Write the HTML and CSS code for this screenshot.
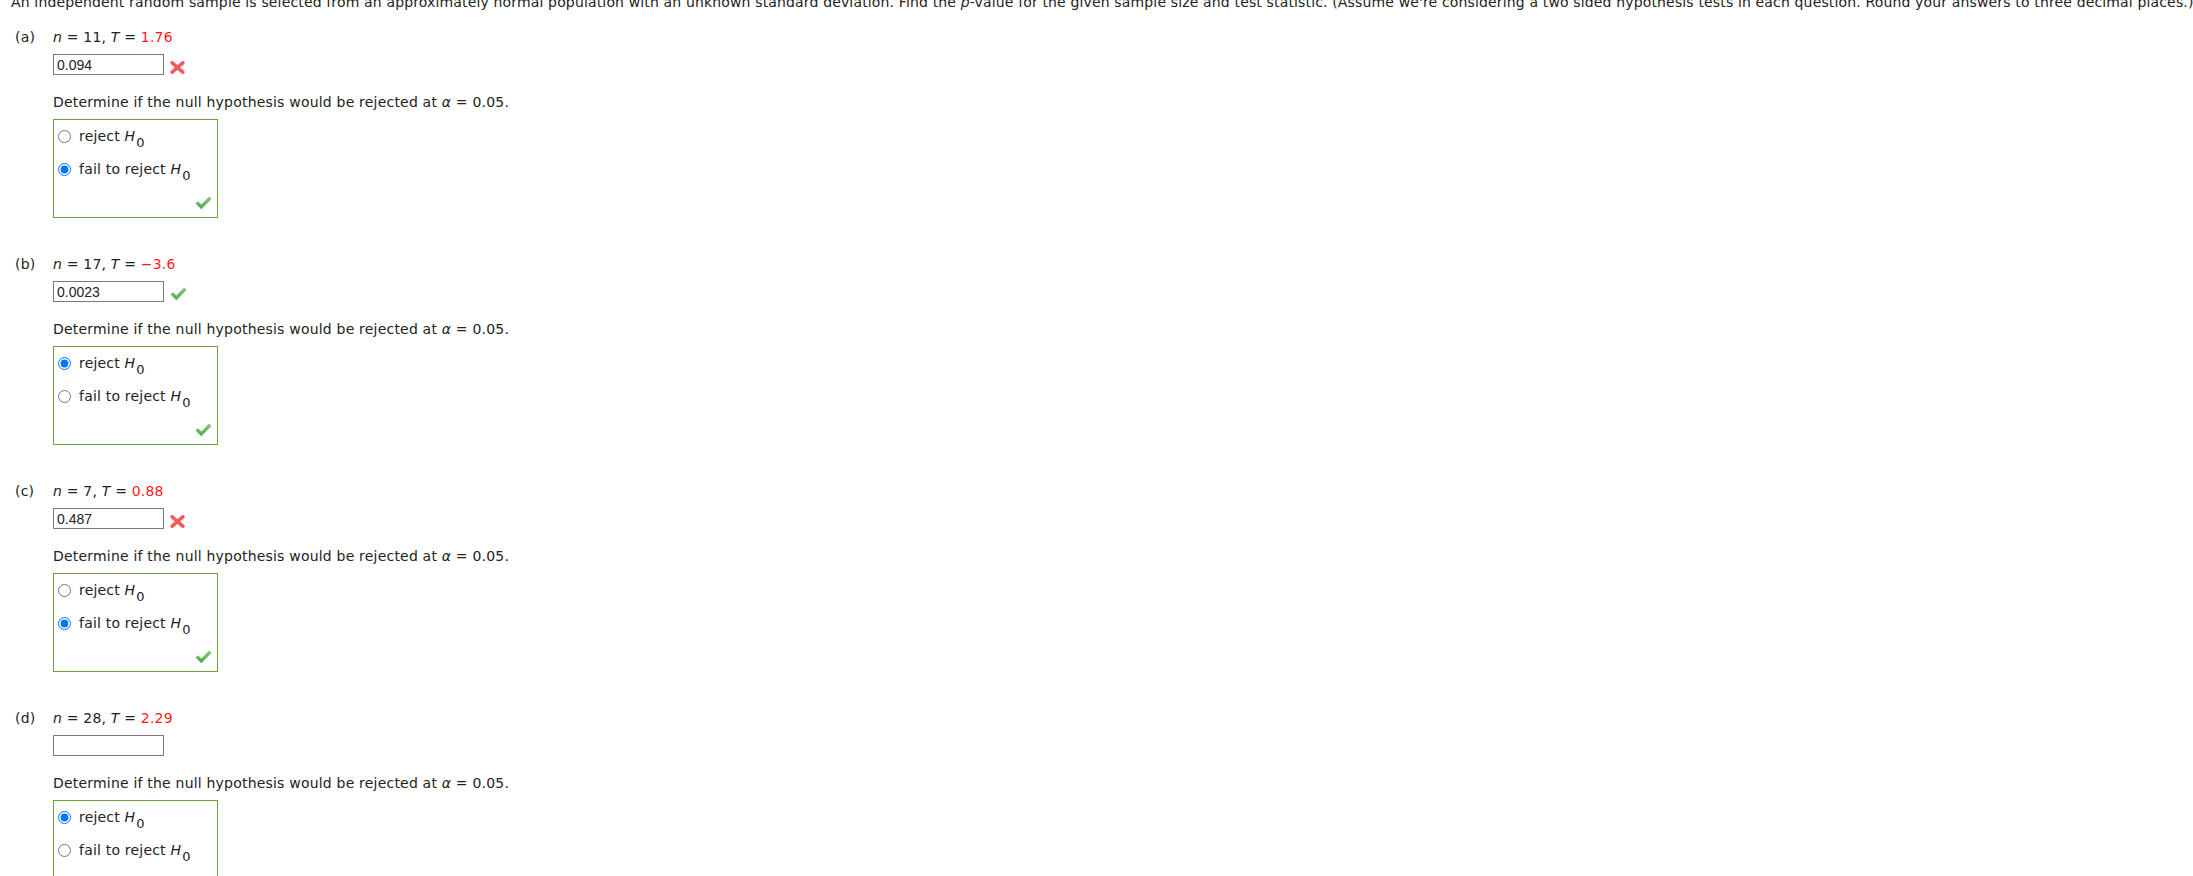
FILE: index.html
```html
<!DOCTYPE html>
<html lang="en">
<head>
<meta charset="utf-8">
<title>Hypothesis tests</title>
<link rel="stylesheet" href="styles.css">
</head>
<body>
<p class="intro">An independent random sample is selected from an approximately normal population with an unknown standard deviation. Find the <i>p</i>-value for the given sample size and test statistic. (Assume we're considering a two sided hypothesis tests in each question. Round your answers to three decimal places.)</p>

<div class="parts">
  <div class="part">
    <div class="label">(a)</div>
    <div class="body">
      <div class="stmt"><i>n</i> = 11, <i>T</i> = <span class="val">1.76</span></div>
      <div class="answer">
        <input class="ans" type="text" value="0.094">
        <svg class="icon-x" width="15" height="13" viewBox="0 0 15 13"><path d="M2.2 1.8 L12.8 11.2 M12.8 1.8 L2.2 11.2" stroke="#f05c5c" stroke-width="3.6" stroke-linecap="round" fill="none"/></svg>
      </div>
      <div class="question">Determine if the null hypothesis would be rejected at <i>α</i> = 0.05.</div>
      <div class="choices">
        <label class="opt"><input type="radio" name="a"><span>reject <i>H</i><sub>0</sub></span></label>
        <label class="opt"><input type="radio" name="a" checked><span>fail to reject <i>H</i><sub>0</sub></span></label>
        <div class="mark">
          <svg class="icon-check" width="17" height="14" viewBox="0 0 17 14"><defs><linearGradient id="g1" x1="0" y1="0" x2="0" y2="1"><stop offset="0" stop-color="#86cc7e"/><stop offset="1" stop-color="#4fa64b"/></linearGradient></defs><path d="M0.5 7.6 L3 5.2 L6.3 8.4 L14.2 0.5 L16.6 2.9 L6.3 13.3 Z" fill="url(#g1)"/></svg>
        </div>
      </div>
    </div>
  </div>

  <div class="part">
    <div class="label">(b)</div>
    <div class="body">
      <div class="stmt"><i>n</i> = 17, <i>T</i> = <span class="val">−3.6</span></div>
      <div class="answer">
        <input class="ans" type="text" value="0.0023">
        <svg class="icon-check side" width="17" height="14" viewBox="0 0 17 14"><defs><linearGradient id="g2" x1="0" y1="0" x2="0" y2="1"><stop offset="0" stop-color="#86cc7e"/><stop offset="1" stop-color="#4fa64b"/></linearGradient></defs><path d="M0.5 7.6 L3 5.2 L6.3 8.4 L14.2 0.5 L16.6 2.9 L6.3 13.3 Z" fill="url(#g2)"/></svg>
      </div>
      <div class="question">Determine if the null hypothesis would be rejected at <i>α</i> = 0.05.</div>
      <div class="choices">
        <label class="opt"><input type="radio" name="b" checked><span>reject <i>H</i><sub>0</sub></span></label>
        <label class="opt"><input type="radio" name="b"><span>fail to reject <i>H</i><sub>0</sub></span></label>
        <div class="mark">
          <svg class="icon-check" width="17" height="14" viewBox="0 0 17 14"><defs><linearGradient id="g3" x1="0" y1="0" x2="0" y2="1"><stop offset="0" stop-color="#86cc7e"/><stop offset="1" stop-color="#4fa64b"/></linearGradient></defs><path d="M0.5 7.6 L3 5.2 L6.3 8.4 L14.2 0.5 L16.6 2.9 L6.3 13.3 Z" fill="url(#g3)"/></svg>
        </div>
      </div>
    </div>
  </div>

  <div class="part">
    <div class="label">(c)</div>
    <div class="body">
      <div class="stmt"><i>n</i> = 7, <i>T</i> = <span class="val">0.88</span></div>
      <div class="answer">
        <input class="ans" type="text" value="0.487">
        <svg class="icon-x" width="15" height="13" viewBox="0 0 15 13"><path d="M2.2 1.8 L12.8 11.2 M12.8 1.8 L2.2 11.2" stroke="#f05c5c" stroke-width="3.6" stroke-linecap="round" fill="none"/></svg>
      </div>
      <div class="question">Determine if the null hypothesis would be rejected at <i>α</i> = 0.05.</div>
      <div class="choices">
        <label class="opt"><input type="radio" name="c"><span>reject <i>H</i><sub>0</sub></span></label>
        <label class="opt"><input type="radio" name="c" checked><span>fail to reject <i>H</i><sub>0</sub></span></label>
        <div class="mark">
          <svg class="icon-check" width="17" height="14" viewBox="0 0 17 14"><defs><linearGradient id="g4" x1="0" y1="0" x2="0" y2="1"><stop offset="0" stop-color="#86cc7e"/><stop offset="1" stop-color="#4fa64b"/></linearGradient></defs><path d="M0.5 7.6 L3 5.2 L6.3 8.4 L14.2 0.5 L16.6 2.9 L6.3 13.3 Z" fill="url(#g4)"/></svg>
        </div>
      </div>
    </div>
  </div>

  <div class="part">
    <div class="label">(d)</div>
    <div class="body">
      <div class="stmt"><i>n</i> = 28, <i>T</i> = <span class="val">2.29</span></div>
      <div class="answer">
        <input class="ans" type="text" value="">
      </div>
      <div class="question">Determine if the null hypothesis would be rejected at <i>α</i> = 0.05.</div>
      <div class="choices">
        <label class="opt"><input type="radio" name="d" checked><span>reject <i>H</i><sub>0</sub></span></label>
        <label class="opt"><input type="radio" name="d"><span>fail to reject <i>H</i><sub>0</sub></span></label>
        <div class="mark">
          <svg class="icon-check" width="17" height="14" viewBox="0 0 17 14"><defs><linearGradient id="g5" x1="0" y1="0" x2="0" y2="1"><stop offset="0" stop-color="#86cc7e"/><stop offset="1" stop-color="#4fa64b"/></linearGradient></defs><path d="M0.5 7.6 L3 5.2 L6.3 8.4 L14.2 0.5 L16.6 2.9 L6.3 13.3 Z" fill="url(#g5)"/></svg>
        </div>
      </div>
    </div>
  </div>
</div>
</body>
</html>
```
FILE: styles.css
```css
html, body {
  margin: 0;
  padding: 0;
  background: #ffffff;
  overflow: hidden;
}

body {
  font-family: "DejaVu Sans", Verdana, sans-serif;
  font-size: 14px;
  line-height: 17px;
  letter-spacing: 0.2px;
  color: #222222;
}

.intro {
  margin: -6.5px 0 0 11px;
  white-space: nowrap;
  letter-spacing: 0.15px;
}

.parts {
  display: flex;
  flex-direction: column;
  gap: 37.5px;
  margin-top: 18px;
}

.part {
  display: flex;
  padding-left: 15px;
}

.label {
  width: 38px;
  flex: none;
}

.body {
  display: flex;
  flex-direction: column;
  align-items: flex-start;
}

.stmt {
  height: 17px;
  white-space: nowrap;
}

.val {
  color: #ff1a1a;
}

.answer {
  display: flex;
  align-items: flex-end;
  margin-top: 8.5px;
  height: 21px;
}

.ans {
  width: 111px;
  height: 21px;
  box-sizing: border-box;
  margin: 0;
  padding: 1px 3px;
  border: 1px solid #7a7a7a;
  border-radius: 0;
  font-family: "Liberation Sans", Arial, sans-serif;
  font-size: 14px;
  letter-spacing: 0;
  color: #222222;
  background: #ffffff;
  outline: none;
}

.icon-x {
  margin: 0 0 1px 6px;
  display: block;
}

.icon-check {
  display: block;
}

.icon-check.side {
  margin: 0 0 1px 6px;
}

.question {
  margin-top: 18.5px;
  white-space: nowrap;
}

.choices {
  margin-top: 8.5px;
  width: 165px;
  height: 99px;
  box-sizing: border-box;
  border: 1px solid #6ba23c;
  display: flex;
  flex-direction: column;
}

.opt {
  height: 33px;
  display: flex;
  align-items: center;
  white-space: nowrap;
}

.opt input {
  width: 13px;
  height: 13px;
  margin: 0 8px 0 4px;
  flex: none;
}

.opt sub {
  font-size: 13px;
  line-height: 0;
  vertical-align: -6px;
  margin-left: 1px;
}

.mark {
  flex: 1;
  display: flex;
  justify-content: flex-end;
  align-items: flex-end;
  padding: 0 5px 7px 0;
}
```
